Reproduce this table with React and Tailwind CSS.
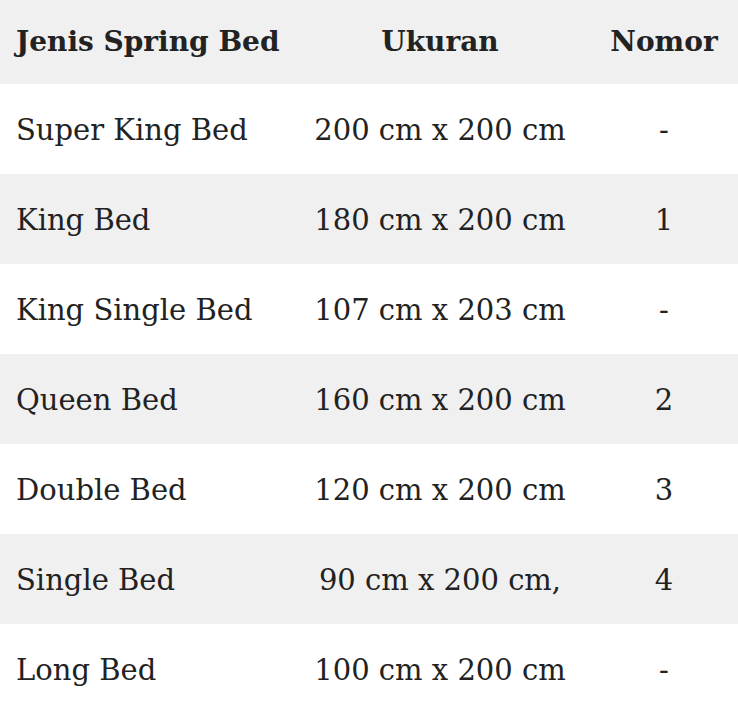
const rows = [
  ["Super King Bed", "200 cm x 200 cm", "-"],
  ["King Bed", "180 cm x 200 cm", "1"],
  ["King Single Bed", "107 cm x 203 cm", "-"],
  ["Queen Bed", "160 cm x 200 cm", "2"],
  ["Double Bed", "120 cm x 200 cm", "3"],
  ["Single Bed", "90 cm x 200 cm,", "4"],
  ["Long Bed", "100 cm x 200 cm", "-"],
];

export default function App() {
  return (
    <div className="w-[738px] h-[704px] overflow-hidden bg-white text-[#222] font-['DejaVu_Serif','Noto_Serif',serif] text-[29px]">
      <table className="w-full table-fixed border-collapse">
        <colgroup>
          <col className="w-[290px]" />
          <col className="w-[300px]" />
          <col className="w-[148px]" />
        </colgroup>
        <thead>
          <tr className="h-[84px] bg-[#f0f0f0] text-[28px]">
            <th className="pl-4 text-left font-bold whitespace-nowrap">Jenis Spring Bed</th>
            <th className="text-center font-bold">Ukuran</th>
            <th className="text-center font-bold">Nomor</th>
          </tr>
        </thead>
        <tbody>
          {rows.map((r, i) => (
            <tr key={i} className={`h-[90px] ${i % 2 ? "bg-[#f0f0f0]" : "bg-white"}`}>
              <td className="pl-4 pt-1 text-left whitespace-nowrap">{r[0]}</td>
              <td className="pt-1 text-center whitespace-nowrap">{r[1]}</td>
              <td className="pt-1 text-center">{r[2]}</td>
            </tr>
          ))}
        </tbody>
      </table>
    </div>
  );
}
